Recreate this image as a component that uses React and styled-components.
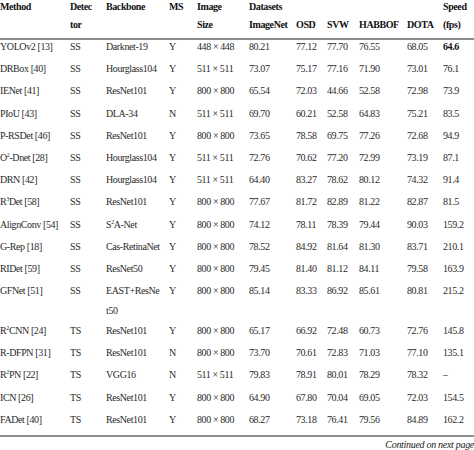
import styled, { createGlobalStyle } from "styled-components";

const GlobalStyle = createGlobalStyle`
  html, body {
    margin: 0;
    padding: 0;
    background: #fff;
    overflow: hidden;
  }
`;

const COLS = "70px 36px 63px 28px 52px 47px 31px 32px 48px 36px 1fr";

const Page = styled.div`
  width: 474px;
  font-family: "Liberation Serif", "Times New Roman", serif;
  font-size: 10px;
  letter-spacing: -0.4px;
  color: #2a2a2a;
`;

const Head = styled.div`
  display: grid;
  grid-template-columns: ${COLS};
  grid-template-rows: 14px 14px;
  row-gap: 4px;
  padding-bottom: 6px;
  border-bottom: 2px solid #8c8c8c;
  line-height: 14px;
  font-weight: 700;
  color: #111;
`;

const HeadCell = styled.div`
  grid-column: ${({ $col }) => $col};
  grid-row: ${({ $row }) => $row};
  white-space: nowrap;
`;

const Body = styled.div`
  border-bottom: 2px solid #8c8c8c;
`;

const Row = styled.div`
  display: grid;
  grid-template-columns: ${COLS};
  align-items: start;
  height: ${({ $tall }) => ($tall ? "40px" : "22.2px")};
  line-height: 14px;
`;

const Cell = styled.div`
  white-space: nowrap;
  font-weight: ${({ $bold }) => ($bold ? 700 : 400)};
  color: ${({ $bold }) => ($bold ? "#111" : "inherit")};
`;

const Lines = styled.div`
  display: flex;
  flex-direction: column;
  gap: 6px;
  white-space: nowrap;
`;

const Sup = styled.sup`
  font-size: 6px;
  line-height: 0;
  vertical-align: 4px;
`;

const Footer = styled.div`
  display: flex;
  justify-content: flex-end;
  padding-top: 2px;
  font-size: 10px;
  letter-spacing: -0.3px;
  font-style: italic;
  line-height: 11px;
  color: #222;
  white-space: nowrap;
`;

const rows = [
  [["YOLOv2 [13]"], "SS", "Darknet-19", "Y", "448 × 448", "80.21", "77.12", "77.70", "76.55", "68.05", "64.6", true],
  [["DRBox [40]"], "SS", "Hourglass104", "Y", "511 × 511", "73.07", "75.17", "77.16", "71.90", "73.01", "76.1"],
  [["IENet [41]"], "SS", "ResNet101", "Y", "800 × 800", "65.54", "72.03", "44.66", "52.58", "72.98", "73.9"],
  [["PIoU [43]"], "SS", "DLA-34", "N", "511 × 511", "69.70", "60.21", "52.58", "64.83", "75.21", "83.5"],
  [["P-RSDet [46]"], "SS", "ResNet101", "Y", "800 × 800", "73.65", "78.58", "69.75", "77.26", "72.68", "94.9"],
  [["O", "2", "-Dnet [28]"], "SS", "Hourglass104", "Y", "511 × 511", "72.76", "70.62", "77.20", "72.99", "73.19", "87.1"],
  [["DRN [42]"], "SS", "Hourglass104", "Y", "511 × 511", "64.40", "83.27", "78.62", "80.12", "74.32", "91.4"],
  [["R", "3", "Det [58]"], "SS", "ResNet101", "Y", "800 × 800", "77.67", "81.72", "82.89", "81.22", "82.87", "81.5"],
  [["AlignConv [54]"], "SS", ["S", "2", "A-Net"], "Y", "800 × 800", "74.12", "78.11", "78.39", "79.44", "90.03", "159.2"],
  [["G-Rep [18]"], "SS", "Cas-RetinaNet", "Y", "800 × 800", "78.52", "84.92", "81.64", "81.30", "83.71", "210.1"],
  [["RIDet [59]"], "SS", "ResNet50", "Y", "800 × 800", "79.45", "81.40", "81.12", "84.11", "79.58", "163.9"],
  [["GFNet [51]"], "SS", { lines: ["EAST+ResNe", "t50"] }, "Y", "800 × 800", "85.14", "83.33", "86.92", "85.61", "80.81", "215.2"],
  [["R", "2", "CNN [24]"], "TS", "ResNet101", "Y", "800 × 800", "65.17", "66.92", "72.48", "60.73", "72.76", "145.8"],
  [["R-DFPN [31]"], "TS", "ResNet101", "N", "800 × 800", "73.70", "70.61", "72.83", "71.03", "77.10", "135.1"],
  [["R", "2", "PN [22]"], "TS", "VGG16", "N", "511 × 511", "79.83", "78.91", "80.01", "78.29", "78.32", "–"],
  [["ICN [26]"], "TS", "ResNet101", "Y", "800 × 800", "64.90", "67.80", "70.04", "69.05", "72.03", "154.5"],
  [["FADet [40]"], "TS", "ResNet101", "Y", "800 × 800", "68.27", "73.18", "76.41", "79.56", "84.89", "162.2"],
];

function Label({ parts }) {
  if (parts.length === 1) return parts[0];
  return (
    <>
      {parts[0]}
      <Sup>{parts[1]}</Sup>
      {parts[2]}
    </>
  );
}

function BackboneCell({ value }) {
  if (value && value.lines) {
    return (
      <Lines>
        {value.lines.map((l) => (
          <span key={l}>{l}</span>
        ))}
      </Lines>
    );
  }
  return <Cell>{Array.isArray(value) ? <Label parts={value} /> : value}</Cell>;
}

export default function App() {
  return (
    <Page>
      <GlobalStyle />
      <Head>
        <HeadCell $col="1" $row="1">Method</HeadCell>
        <HeadCell $col="2" $row="1">Detec</HeadCell>
        <HeadCell $col="2" $row="2">tor</HeadCell>
        <HeadCell $col="3" $row="1">Backbone</HeadCell>
        <HeadCell $col="4" $row="1">MS</HeadCell>
        <HeadCell $col="5" $row="1">Image</HeadCell>
        <HeadCell $col="5" $row="2">Size</HeadCell>
        <HeadCell $col="6 / span 5" $row="1">Datasets</HeadCell>
        <HeadCell $col="6" $row="2">ImageNet</HeadCell>
        <HeadCell $col="7" $row="2">OSD</HeadCell>
        <HeadCell $col="8" $row="2">SVW</HeadCell>
        <HeadCell $col="9" $row="2">HABBOF</HeadCell>
        <HeadCell $col="10" $row="2">DOTA</HeadCell>
        <HeadCell $col="11" $row="1">Speed</HeadCell>
        <HeadCell $col="11" $row="2">(fps)</HeadCell>
      </Head>
      <Body>
        {rows.map((r, i) => {
          const [method, det, backbone, ms, size, ...rest] = r;
          const nums = rest.slice(0, 6);
          const boldSpeed = rest[6];
          return (
            <Row key={i} $tall={backbone && backbone.lines}>
              <Cell>
                <Label parts={method} />
              </Cell>
              <Cell>{det}</Cell>
              <BackboneCell value={backbone} />
              <Cell>{ms}</Cell>
              <Cell>{size}</Cell>
              {nums.map((n, j) => (
                <Cell key={j} $bold={j === 5 && boldSpeed}>
                  {n}
                </Cell>
              ))}
            </Row>
          );
        })}
      </Body>
      <Footer>Continued on next page</Footer>
    </Page>
  );
}
